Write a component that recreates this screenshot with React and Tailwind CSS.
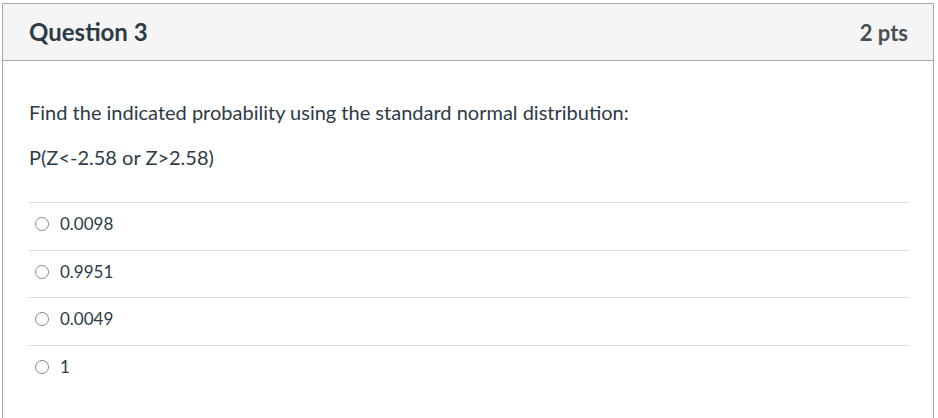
export default function App() {
  const options = ["0.0098", "0.9951", "0.0049", "1"];
  return (
    <div className="w-[938px] h-[418px] bg-white overflow-hidden pt-[3px] pl-[2px]" style={{ fontFamily: "Lato, 'Noto Sans', sans-serif" }}>
      <div className="w-[932px] h-[420px] border border-[#a8a8a8] border-b-0 text-[#2d3b45]">
        <div className="h-[57px] bg-[#f5f5f5] border-b border-[#a8a8a8] flex items-center justify-between pl-[26px] pr-[25px]">
          <div className="text-[24px] font-bold">Question 3</div>
          <div className="text-[22px] font-bold text-[#4a4f55]">2 pts</div>
        </div>
        <div className="pl-[26px] pr-[24px]">
          <div className="pt-[39px] text-[20px] leading-[24px]">Find the indicated probability using the standard normal distribution:</div>
          <div className="pt-[21px] text-[20px] leading-[24px]">P(Z&lt;-2.58 or Z&gt;2.58)</div>
          <div className="mt-[33px]">
            {options.map((o) => (
              <div key={o} className="h-[47.67px] border-t border-[#dcdcdc] flex items-start pt-[9px]">
                <span className="mt-[5px] ml-[6px] w-[14px] h-[14px] rounded-full border border-[#8a8a8a] bg-white"></span>
                <span className="ml-[11px] text-[17px] leading-[24px]">{o}</span>
              </div>
            ))}
          </div>
        </div>
      </div>
    </div>
  );
}
